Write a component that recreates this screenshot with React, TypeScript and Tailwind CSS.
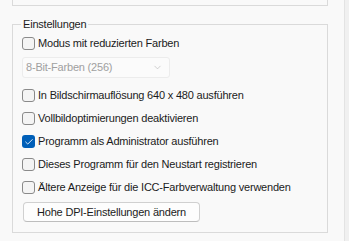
import { Check, ChevronDown } from 'lucide-react';

const Box = ({ checked = false }: { checked?: boolean }) => {
  if (checked) {
    return (
      <span className="w-[13px] h-[13px] rounded-[3px] bg-[#005fb8] flex items-center justify-center shrink-0">
        <Check size={10} strokeWidth={2} className="text-white" />
      </span>
    );
  }
  return <span className="w-[13px] h-[13px] rounded-[3px] border border-[#8a8a8a] bg-[#f4f4f4] shrink-0" />;
};

const Option = ({ label, checked = false }: { label: string; checked?: boolean }) => (
  <label className="h-[23px] flex items-center gap-[3px]">
    <Box checked={checked} />
    <span>{label}</span>
  </label>
);

const App = () => {
  return (
    <div className="flex w-[349px] h-[241px] bg-[#f9f9f9] text-[11px] tracking-[-0.2px] text-[#1b1b1b] font-['Liberation_Sans',sans-serif] overflow-hidden">
      <div className="w-[344px] pl-[12px] pr-[16px]">
        <div className="h-[6px] border-x border-b border-[#dadada]" />

        {/* Einstellungen group */}
        <div className="relative mt-[18px] border border-[#dadada] pt-[7px] pl-[9px] pb-[10px]">
          <span className="absolute left-[8px] top-[-9px] px-[2px] bg-[#f9f9f9] leading-[16px]">Einstellungen</span>

          <Option label="Modus mit reduzierten Farben" />

          <div className="mt-[2px] w-[148px] h-[21px] flex items-center justify-between pl-[3px] pr-[6px] border border-[#ececec] rounded-[3px] bg-[#fbfbfb] text-[#a0a0a0]">
            <span>8-Bit-Farben (256)</span>
            <ChevronDown size={11} strokeWidth={1.25} className="text-[#b0b0b0]" />
          </div>

          <div className="mt-[6px]">
            <Option label="In Bildschirmauflösung 640 x 480 ausführen" />
            <Option label="Vollbildoptimierungen deaktivieren" />
            <Option label="Programm als Administrator ausführen" checked />
            <Option label="Dieses Programm für den Neustart registrieren" />
            <Option label="Ältere Anzeige für die ICC-Farbverwaltung verwenden" />
          </div>

          <button className="mt-[3px] ml-[1px] h-[20px] w-[177px] border border-[#d0d0d0] border-b-[#bdbdbd] rounded-[4px] bg-[#fdfdfd] leading-none">
            Hohe DPI-Einstellungen ändern
          </button>
        </div>
      </div>
      <div className="flex-1 border-l border-[#e3e3e3] bg-[#f0f0f0]" />
    </div>
  );
};

export default App;
